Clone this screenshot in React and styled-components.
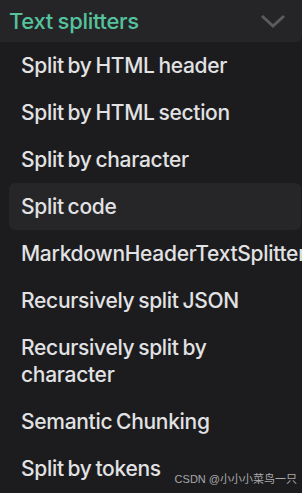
import React from 'react'
import styled, { createGlobalStyle } from 'styled-components'

const GlobalStyle = createGlobalStyle`
  html, body {
    margin: 0;
    padding: 0;
    background: #1c1c1e;
    overflow: hidden;
  }
  body {
    font-family: Inter, "Noto Sans", sans-serif;
  }
`

const Panel = styled.nav`
  position: relative;
  width: 302px;
  height: 493px;
  overflow: hidden;
  background: #1c1c1e;
`

const Header = styled.div`
  display: flex;
  align-items: center;
  justify-content: space-between;
  height: 42px;
  padding: 0 16px 0 9px;
  background: #252527;
  border-bottom-right-radius: 6px;
`

const HeaderTitle = styled.span`
  font-size: 22px;
  font-weight: 500;
  color: #55c29d;
  letter-spacing: -0.3px;
  word-spacing: -1px;
`

const List = styled.ul`
  list-style: none;
  margin: 0;
  padding: 0;
`

const Item = styled.li`
  margin: 0 1px 0 9px;
  padding: 10px 12px;
  font-size: 21px;
  line-height: 27px;
  font-weight: 500;
  color: #e2e2e4;
  letter-spacing: -0.3px;
  word-spacing: -1.5px;
  white-space: ${(props) => (props.$nowrap ? 'nowrap' : 'normal')};
  border-radius: 6px;
  background: ${(props) => (props.$active ? '#262628' : 'transparent')};
`

const Watermark = styled.span`
  position: absolute;
  right: 5px;
  bottom: 7px;
  font-family: "Liberation Sans", "Noto Sans CJK SC", sans-serif;
  font-size: 11px;
  color: #a8a8aa;
`

const items = [
  'Split by HTML header',
  'Split by HTML section',
  'Split by character',
  'Split code',
  'MarkdownHeaderTextSplitter',
  'Recursively split JSON',
  'Recursively split by character',
  'Semantic Chunking',
  'Split by tokens'
]

function Chevron() {
  return (
    <svg width="26" height="16" viewBox="0 0 26 16" fill="none">
      <path d="M2 3 L13 13 L24 3" stroke="#5b5b5e" strokeWidth="3" />
    </svg>
  )
}

function App() {
  return (
    <>
      <GlobalStyle />
      <Panel>
        <Header>
          <HeaderTitle>Text splitters</HeaderTitle>
          <Chevron />
        </Header>
        <List>
          {items.map((name) => (
            <Item
              key={name}
              $active={name === 'Split code'}
              $nowrap={!name.includes(' ')}
            >
              {name}
            </Item>
          ))}
        </List>
        <Watermark>CSDN @小小小菜鸟一只</Watermark>
      </Panel>
    </>
  )
}

export default App
